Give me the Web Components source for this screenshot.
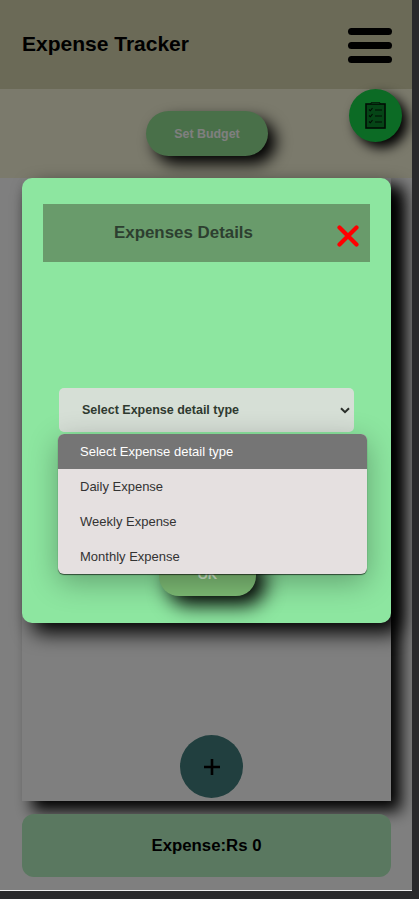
<!DOCTYPE html>
<html lang="en">
<head>
<meta charset="utf-8">
<title>Expense Tracker</title>
<style>
  html, body { margin: 0; padding: 0; background: #29292b; font-family: "Liberation Sans", Arial, sans-serif; }
</style>
</head>
<body>
<expense-app></expense-app>
<script>
// Top bar with title and menu
class AppHeader extends HTMLElement {
    constructor() {
        super();
        this.attachShadow({ mode: 'open' });
        this.shadowRoot.innerHTML = `
            <style>
                :host {
                    display: flex;
                    align-items: center;
                    justify-content: space-between;
                    height: 89px;
                    box-sizing: border-box;
                    padding: 0 20px 0 22px;
                    background: #d6d4ae;
                }
                h1 { margin: 0 0 1px; font-size: 21px; font-weight: 700; color: #000; }
                .menu { display: flex; flex-direction: column; gap: 7px; margin-top: 1px; }
                .menu span { display: block; width: 44px; height: 7px; border-radius: 4px; background: #000; }
            </style>
            <h1><slot></slot></h1>
            <div class="menu"><span></span><span></span><span></span></div>
        `;
    }
}

// Budget strip with the floating checklist button
class BudgetBar extends HTMLElement {
    constructor() {
        super();
        this.attachShadow({ mode: 'open' });
        this.shadowRoot.innerHTML = `
            <style>
                :host {
                    display: flex;
                    align-items: center;
                    justify-content: center;
                    position: relative;
                    height: 89px;
                    background: #f6f4d8;
                }
                button {
                    width: 122px;
                    height: 45px;
                    margin-left: 2px;
                    border: 0;
                    border-radius: 23px;
                    background: #93e092;
                    color: #fff;
                    font: 700 12.4px "Liberation Sans", Arial, sans-serif;
                    box-shadow: 8px 8px 15px #000;
                }
                .fab {
                    position: absolute;
                    top: 0;
                    left: 349px;
                    width: 53px;
                    height: 53px;
                    border-radius: 50%;
                    background: #18d64a;
                    display: flex;
                    align-items: center;
                    justify-content: center;
                    box-shadow: 6px 6px 12px #000;
                }
            </style>
            <button><slot></slot></button>
            <div class="fab">
                <svg width="21" height="27" viewBox="0 0 21 27" fill="#0a8a2c" stroke="#021a08" stroke-width="1.6">
                    <rect x="1" y="2" width="19" height="24"></rect>
                    <path d="M6 2V0.8h9V2" stroke-width="1"></path>
                    <path d="M4 7.5l1.3 1.3 2.2-2.6M4 13.5l1.3 1.3 2.2-2.6M4 19.5l1.3 1.3 2.2-2.6" fill="none" stroke-width="1.1"></path>
                    <path d="M10 8h7M10 14h7M10 20h7" stroke-width="1.2"></path>
                </svg>
            </div>
        `;
    }
}

// Expense list area with the add button at its foot
class ExpenseList extends HTMLElement {
    constructor() {
        super();
        this.attachShadow({ mode: 'open' });
        this.shadowRoot.innerHTML = `
            <style>
                :host {
                    display: flex;
                    flex: 1;
                    align-items: flex-end;
                    justify-content: center;
                    box-sizing: border-box;
                    padding: 0 0 3px 10px;
                    background: #fff;
                    box-shadow: 10px 10px 15px #000;
                }
                .add {
                    width: 63px;
                    height: 63px;
                    border-radius: 50%;
                    background: #427f7e;
                    display: flex;
                    align-items: center;
                    justify-content: center;
                }
            </style>
            <div class="add">
                <svg width="18" height="18" viewBox="0 0 18 18" stroke="#000" stroke-width="2.6"><path d="M9 1v16M1 9h16"></path></svg>
            </div>
        `;
    }
}

class ExpenseTotal extends HTMLElement {
    constructor() {
        super();
        this.attachShadow({ mode: 'open' });
        this.shadowRoot.innerHTML = `
            <style>
                :host {
                    display: flex;
                    align-items: center;
                    justify-content: center;
                    height: 63px;
                    margin-top: 13px;
                    border-radius: 12px;
                    background: #b4f0c0;
                    font-size: 16.8px;
                    font-weight: 700;
                    color: #000;
                }
            </style>
            <slot></slot>
        `;
    }
}

// Select box with its open list of options
class SelectMenu extends HTMLElement {
    constructor() {
        super();
        this.attachShadow({ mode: 'open' });
        const options = ['Select Expense detail type', 'Daily Expense', 'Weekly Expense', 'Monthly Expense'];
        this.shadowRoot.innerHTML = `
            <style>
                :host {
                    display: block;
                    position: relative;
                    z-index: 1;
                    width: 295px;
                    margin-left: 16px;
                }
                .box {
                    display: flex;
                    align-items: center;
                    justify-content: space-between;
                    height: 44px;
                    box-sizing: border-box;
                    padding: 0 4px 0 23px;
                    border-radius: 5px;
                    background: #d6dfd6;
                    color: #2f3a30;
                    font-size: 12.5px;
                    font-weight: 700;
                }
                .list {
                    position: absolute;
                    top: 46px;
                    left: -1px;
                    width: 309px;
                    border-radius: 6px;
                    overflow: hidden;
                    background: #e5e0e0;
                    box-shadow: 0 1px 1px rgba(0, 0, 0, 0.6), 0 8px 30px rgba(0, 0, 0, 0.3);
                }
                .list div {
                    height: 35px;
                    line-height: 36px;
                    padding-left: 22px;
                    font-size: 13px;
                    color: #333;
                }
                .list div:first-child { background: #757575; color: #fff; }
            </style>
            <div class="box">
                <span>${options[0]}</span>
                <svg width="10" height="7" viewBox="0 0 10 7" fill="none" stroke="#2a2f2a" stroke-width="2"><path d="M1 1.2l4 4 4-4"></path></svg>
            </div>
            <div class="list">
                ${options.map(option => `<div>${option}</div>`).join('')}
            </div>
        `;
    }
}

// Modal dialog laid over the dimmed page
class ExpenseModal extends HTMLElement {
    constructor() {
        super();
        this.attachShadow({ mode: 'open' });
        this.shadowRoot.innerHTML = `
            <style>
                :host {
                    display: block;
                    position: absolute;
                    top: 178px;
                    left: 22px;
                    width: 369px;
                    height: 445px;
                    box-sizing: border-box;
                    padding: 26px 21px 0;
                    border-radius: 10px;
                    background: #8de6a0;
                    box-shadow: 10px 10px 20px #000;
                }
                header {
                    display: flex;
                    align-items: center;
                    height: 58px;
                    padding: 0 11px 0 71px;
                    background: #699b6b;
                }
                h2 { flex: 1; margin: 0; font-size: 16.9px; font-weight: 700; color: #2d3f30; }
                svg { display: block; margin-top: 6px; }
                .ok {
                    display: block;
                    width: 97px;
                    height: 45px;
                    margin: 119px 0 0 116px;
                    padding: 2px 0 0;
                    border: 0;
                    border-radius: 20px;
                    background: #7dbb74;
                    color: #cfe6ca;
                    font: 700 13px "Liberation Sans", Arial, sans-serif;
                    box-shadow: 9px 9px 20px #000;
                }
                select-menu { margin-top: 126px; }
            </style>
            <header>
                <h2><slot></slot></h2>
                <svg width="22" height="22" viewBox="0 0 22 22" stroke="#f00" stroke-width="4.2" stroke-linecap="round"><path d="M2.5 2.5l17 17M19.5 2.5l-17 17"></path></svg>
            </header>
            <select-menu></select-menu>
            <button class="ok">OK</button>
        `;
    }
}

// Page shell
class ExpenseApp extends HTMLElement {
    constructor() {
        super();
        this.attachShadow({ mode: 'open' });
        this.shadowRoot.innerHTML = `
            <style>
                :host {
                    display: flex;
                    flex-direction: column;
                    position: relative;
                    width: 412px;
                    height: 890px;
                    overflow: hidden;
                    border-bottom: 1.5px solid #eee;
                    background: #fff;
                }
                main {
                    display: flex;
                    flex: 1;
                    flex-direction: column;
                    padding: 0 21px 13px 22px;
                }
                .dim {
                    position: absolute;
                    inset: 0;
                    background: rgba(0, 0, 0, 0.5);
                }
            </style>
            <app-header>Expense Tracker</app-header>
            <budget-bar>Set Budget</budget-bar>
            <main>
                <expense-list></expense-list>
                <expense-total>Expense:Rs 0</expense-total>
            </main>
            <div class="dim"></div>
            <expense-modal>Expenses Details</expense-modal>
        `;
    }
}

customElements.define('app-header', AppHeader);
customElements.define('budget-bar', BudgetBar);
customElements.define('expense-list', ExpenseList);
customElements.define('expense-total', ExpenseTotal);
customElements.define('select-menu', SelectMenu);
customElements.define('expense-modal', ExpenseModal);
customElements.define('expense-app', ExpenseApp);
</script>
</body>
</html>
